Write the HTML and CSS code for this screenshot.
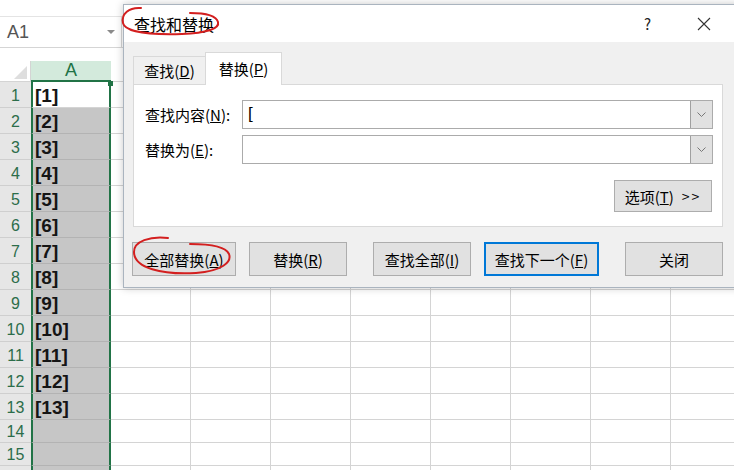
FILE: index.html
```html
<!DOCTYPE html>
<html lang="zh-CN">
<head>
  <meta charset="UTF-8">
  <title>查找和替换</title>
  <link rel="stylesheet" href="styles.css">
</head>
<body>

  <!-- Worksheet behind the dialog -->
  <div class="sheet">
    <div class="namebar">
      <div class="namebox">A1<span class="drop"></span></div>
    </div>

    <div class="grid">
      <div class="row head"><div class="corner"></div><div class="colhead">A</div><div class="rest"></div></div>
      <div class="row active"><div class="rh">1</div><div class="ca">[1]</div><div class="rest"></div></div>
      <div class="row"><div class="rh">2</div><div class="ca">[2]</div><div class="rest"></div></div>
      <div class="row"><div class="rh">3</div><div class="ca">[3]</div><div class="rest"></div></div>
      <div class="row"><div class="rh">4</div><div class="ca">[4]</div><div class="rest"></div></div>
      <div class="row"><div class="rh">5</div><div class="ca">[5]</div><div class="rest"></div></div>
      <div class="row"><div class="rh">6</div><div class="ca">[6]</div><div class="rest"></div></div>
      <div class="row"><div class="rh">7</div><div class="ca">[7]</div><div class="rest"></div></div>
      <div class="row"><div class="rh">8</div><div class="ca">[8]</div><div class="rest"></div></div>
      <div class="row"><div class="rh">9</div><div class="ca">[9]</div><div class="rest"></div></div>
      <div class="row"><div class="rh">10</div><div class="ca">[10]</div><div class="rest"></div></div>
      <div class="row"><div class="rh">11</div><div class="ca">[11]</div><div class="rest"></div></div>
      <div class="row"><div class="rh">12</div><div class="ca">[12]</div><div class="rest"></div></div>
      <div class="row"><div class="rh">13</div><div class="ca">[13]</div><div class="rest"></div></div>
      <div class="row short"><div class="rh">14</div><div class="ca"></div><div class="rest"></div></div>
      <div class="row short"><div class="rh">15</div><div class="ca"></div><div class="rest"></div></div>
      <div class="row short"><div class="rh"></div><div class="ca"></div><div class="rest"></div></div>
    </div>
  </div>

  <!-- Find & replace dialog -->
  <div class="dialog">
    <div class="titlebar">
      <span class="title">查找和替换</span>
      <span class="help">?</span>
      <svg class="close" width="14" height="14" viewBox="0 0 14 14">
        <path d="M1 1 L13 13 M13 1 L1 13" stroke="#333" stroke-width="1.1" fill="none"/>
      </svg>
    </div>

    <div class="body">
      <div class="tabs">
        <div class="tab">查找(<u>D</u>)</div>
        <div class="tab on">替换(<u>P</u>)</div>
      </div>

      <div class="panel">
        <div class="field">
          <label>查找内容(<u>N</u>):</label>
          <div class="input">
            <span class="val">[</span>
            <span class="dd"><svg width="9" height="5" viewBox="0 0 9 5"><path d="M0.5 0.5 L4.5 4.5 L8.5 0.5" stroke="#777" fill="none"/></svg></span>
          </div>
        </div>
        <div class="field">
          <label>替换为(<u>E</u>):</label>
          <div class="input">
            <span class="val"></span>
            <span class="dd"><svg width="9" height="5" viewBox="0 0 9 5"><path d="M0.5 0.5 L4.5 4.5 L8.5 0.5" stroke="#777" fill="none"/></svg></span>
          </div>
        </div>
        <div class="optrow">
          <div class="btn">选项(<u>T</u>)<span class="more">&gt;&gt;</span></div>
        </div>
      </div>

      <div class="actions">
        <div class="btn wide">全部替换(<u>A</u>)</div>
        <div class="btn near">替换(<u>R</u>)</div>
        <div class="btn far">查找全部(<u>I</u>)</div>
        <div class="btn near next">查找下一个(<u>F</u>)</div>
        <div class="btn far">关闭</div>
      </div>
    </div>
  </div>

  <!-- Pen marks drawn on top -->
  <svg class="marks" width="734" height="470" viewBox="0 0 734 470">
    <path d="M141 8 C129 7 121 14 123 23 C125 32 150 35 182 34 C206 33 220 29 218 22 C216 15 204 13 190 13"
          stroke="#d31f1f" stroke-width="2" fill="none" stroke-linecap="round"/>
    <path d="M168 238 C150 236 134 241 134 252 C134 268 162 275 196 273 C222 271 232 262 229 254 C226 247 210 244 190 244"
          stroke="#d31f1f" stroke-width="2" fill="none" stroke-linecap="round"/>
  </svg>

</body>
</html>
```

FILE: styles.css
```css
html,
body {
  margin: 0;
  height: 100%;
}

body {
  width: 734px;
  height: 470px;
  overflow: hidden;
  position: relative;
  background: #fff;
  font-family: "Liberation Sans", Arial, sans-serif;
}

/* ---- worksheet ---- */

.namebar {
  height: 47px;
  border-bottom: 1px solid #d5d5d5;
  margin-bottom: 13px;
  display: flex;
  align-items: flex-end;
}

.namebox {
  width: 122px;
  height: 31px;
  box-sizing: border-box;
  border-top: 1px solid #e4e4e4;
  border-right: 1px solid #d5d5d5;
  display: flex;
  align-items: center;
  justify-content: space-between;
  padding: 0 6px 0 7px;
  font-size: 18px;
  color: #555;
}

.namebox .drop {
  border-left: 4px solid transparent;
  border-right: 4px solid transparent;
  border-top: 4px solid #8a8a8a;
}

.row {
  display: flex;
  height: 26px;
}

.row.short {
  height: 23px;
}

.row.head {
  height: 21px;
}

.row > div {
  box-sizing: border-box;
}

.corner {
  width: 31px;
  flex: none;
  position: relative;
  border-right: 1px solid #d4d4d4;
  border-bottom: 1px solid #d4d4d4;
}

.corner::after {
  content: "";
  position: absolute;
  right: 3px;
  bottom: 2px;
  border-left: 13px solid transparent;
  border-bottom: 13px solid #dedede;
}

.colhead {
  width: 80px;
  flex: none;
  background: #d3eadc;
  border-bottom: 2px solid #217346;
  color: #217346;
  font-size: 18px;
  line-height: 19px;
  text-align: center;
}

.rh {
  width: 31px;
  flex: none;
  background: #e6e6e6;
  border-bottom: 1px solid #cfcfcf;
  color: #2c6d4a;
  font-size: 16px;
  padding-top: 2px;
  display: flex;
  align-items: center;
  justify-content: center;
}

.ca {
  width: 80px;
  flex: none;
  background: #c6c6c6;
  border-left: 2px solid #217346;
  border-right: 2px solid #217346;
  border-bottom: 1px solid #b3b3b3;
  padding: 3px 0 0 2px;
  display: flex;
  align-items: center;
  font-size: 19px;
  font-weight: bold;
  color: #151515;
}

.row.active .ca {
  background: #fff;
  border-bottom-color: #d4d4d4;
  position: relative;
}

/* fill handle */
.row.active .ca::after {
  content: "";
  position: absolute;
  right: -4px;
  top: -1px;
  width: 5px;
  height: 5px;
  background: #217346;
}

.rest {
  flex: 1;
  background: repeating-linear-gradient(to right, #fff 0 79px, #d4d4d4 79px 80px);
  border-bottom: 1px solid #d4d4d4;
}

/* ---- dialog ---- */

.dialog {
  position: absolute;
  left: 123px;
  top: 4px;
  width: 622px;
  height: 282px;
  border: 1px solid #aab4bf;
  background: #f0f0f0;
  box-shadow: 0 0 8px rgba(0, 0, 0, 0.22);
  font-family: "Noto Sans CJK SC", sans-serif;
  font-size: 15px;
  color: #000;
}

.titlebar {
  height: 37px;
  background: #fff;
  display: flex;
  align-items: center;
  padding-left: 10px;
}

.title {
  flex: 1;
  font-size: 16px;
  padding-top: 1px;
}

.help {
  font-size: 15px;
  color: #222;
}

.close {
  margin-left: 46px;
  margin-right: 35px;
}

.body {
  padding: 10px 0 0 9px;
}

.tabs {
  display: flex;
  align-items: flex-end;
  height: 32px;
}

.tab {
  width: 72px;
  height: 28px;
  box-sizing: border-box;
  border: 1px solid #d9d9d9;
  border-bottom: none;
  border-right: none;
  display: flex;
  align-items: center;
  justify-content: center;
}

.tab.on {
  width: 77px;
  height: 33px;
  margin-bottom: -1px;
  background: #fff;
  border-right: 1px solid #d9d9d9;
  padding-bottom: 2px;
  position: relative;
}

.panel {
  width: 590px;
  height: 143px;
  box-sizing: border-box;
  border: 1px solid #d9d9d9;
  background: #fff;
  padding: 15px 9px 0 11px;
}

.field {
  display: flex;
  align-items: center;
  height: 29px;
}

.field + .field {
  margin-top: 6px;
}

.field label {
  width: 97px;
  flex: none;
}

.input {
  flex: 1;
  height: 29px;
  box-sizing: border-box;
  border: 1px solid #ababab;
  display: flex;
}

.input .val {
  flex: 1;
  padding-left: 5px;
  font-family: "Liberation Sans", Arial, sans-serif;
  font-size: 17px;
  line-height: 26px;
}

.input .dd {
  width: 21px;
  background: #e1e1e1;
  border-left: 1px solid #a0a0a0;
  display: flex;
  align-items: center;
  justify-content: center;
}

.optrow {
  display: flex;
  justify-content: flex-end;
  margin-top: 16px;
  padding-right: 1px;
}

.optrow .btn {
  height: 32px;
}

.more {
  margin-left: 8px;
  letter-spacing: 2px;
  font-size: 14px;
}

.actions {
  display: flex;
  margin-top: 15px;
  margin-left: -1px;
}

.btn {
  width: 98px;
  height: 34px;
  box-sizing: border-box;
  background: #e1e1e1;
  border: 1px solid #adadad;
  display: flex;
  align-items: center;
  justify-content: center;
}

.btn.wide {
  width: 104px;
}

.btn.near {
  margin-left: 13px;
}

.btn.far {
  margin-left: 26px;
}

.btn.next {
  width: 115px;
  border: 2px solid #0078d7;
}

/* ---- pen marks ---- */

.marks {
  position: absolute;
  left: 0;
  top: 0;
  pointer-events: none;
}
```
